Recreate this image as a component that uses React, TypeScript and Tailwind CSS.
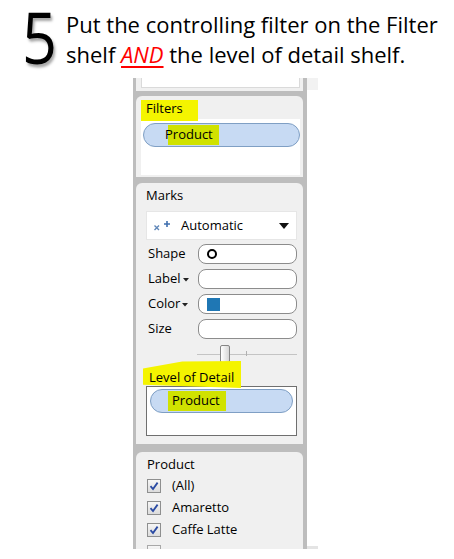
import React from "react";

const Check = () => (
  <div className="w-[14px] h-[14px] border border-[#8e8f8f] bg-gradient-to-b from-[#f6f6f6] to-[#dcdcdc] flex items-center justify-center shrink-0">
    <svg width="10" height="10" viewBox="0 0 10 10">
      <path d="M1.5 5.2 L4 8 L8.6 1.6" fill="none" stroke="#2a4aa3" strokeWidth="1.8" />
    </svg>
  </div>
);

const EmptyCheck = () => (
  <div className="w-[14px] h-[14px] border border-[#a8a8a8] bg-gradient-to-b from-[#f6f6f6] to-[#dcdcdc] shrink-0" />
);

const SmallArrow = () => (
  <svg width="6" height="4" viewBox="0 0 6 4" className="ml-[2px] mt-[2px]">
    <path d="M0 0 L6 0 L3 3.5 Z" fill="#222" />
  </svg>
);

const Pill = ({ hl }: { hl: string }) => (
  <div className="h-[24px] rounded-full border border-[#7f9fc4] bg-[#c7daf3] flex items-center relative">
    <div className={`absolute top-[1px] bottom-[1px] ${hl} bg-[#d0e200]`} />
    <span className="relative ml-[21px]">Product</span>
  </div>
);

export default function App() {
  return (
    <div
      className="w-[454px] h-[559px] bg-white overflow-hidden text-black"
      style={{ fontFamily: '"Open Sans", sans-serif' }}
    >
      <div className="h-[78px] flex">
        <div className="w-[66px] flex justify-center pl-[14px]">
          <span className="text-[72px] leading-[72px] scale-x-[0.85] inline-block [text-shadow:2px_3px_3px_rgba(0,0,0,0.35)]">
            5
          </span>
        </div>
        <div className="pt-[9px] text-[22px] leading-[30px]">
          <div>Put the controlling filter on the Filter</div>
          <div>
            shelf{" "}
            <span className="text-[#ff0000] italic underline decoration-[2px] underline-offset-[3px]">AND</span>{" "}
            the level of detail shelf.
          </div>
        </div>
      </div>

      <div className="flex">
        <div className="ml-[133px] w-[174px] h-[471px] bg-[#bdbdbd] pl-[3px] pr-[4px] flex flex-col overflow-hidden text-[13px]">
          {/* previous card (cut off) */}
          <div className="h-[13px] bg-[#f0f0f0] pl-[5px] pr-[3px] shrink-0">
            <div className="h-[10px] bg-white border-x border-b border-[#dadada]" />
          </div>

          {/* Filters card */}
          <div className="mt-[5px] h-[81px] bg-[#f0f0f0] rounded-t-[6px] pl-[5px] pr-[3px] flex flex-col shrink-0">
            <div className="h-[23px] flex items-center relative">
              <div className="absolute left-0 top-[4px] w-[57px] h-[21px] bg-[#f4f400]" />
              <span className="relative ml-[5px] leading-[16px]">Filters</span>
            </div>
            <div className="h-[56px] bg-white pt-[4px] pl-[2px]">
              <Pill hl="left-[24px] w-[51px]" />
            </div>
          </div>

          {/* Marks card */}
          <div className="mt-[6px] h-[261px] bg-[#f0f0f0] rounded-t-[6px] pl-[10px] pr-[6px] flex flex-col shrink-0">
            <div className="h-[28px] flex items-center">
              <span className="leading-[16px] mb-[4px]">Marks</span>
            </div>
            <div className="h-[29px] bg-white border border-[#e6e6e6] flex items-center pl-[6px] pr-[7px]">
              <svg width="18" height="12" viewBox="0 0 18 12" className="mr-[10px]">
                <path d="M1.5 5.5 L6 10 M6 5.5 L1.5 10" stroke="#5f86b8" strokeWidth="1.4" />
                <path d="M11 4 L17 4 M14 1 L14 7" stroke="#3f6fae" strokeWidth="1.6" />
              </svg>
              <span className="flex-1">Automatic</span>
              <svg width="10" height="6" viewBox="0 0 10 6">
                <path d="M0 0 L10 0 L5 6 Z" fill="#111" />
              </svg>
            </div>

            <div className="mt-[4px] flex flex-col gap-[5px]">
              <div className="h-[20px] flex items-center">
                <span className="w-[52px] pl-[2px]">Shape</span>
                <div className="flex-1 h-[20px] rounded-[8px] border border-[#8c8c8c] bg-white flex items-center pl-[8px]">
                  <div className="w-[10px] h-[10px] rounded-full border-[2px] border-black" />
                </div>
              </div>
              <div className="h-[20px] flex items-center">
                <span className="w-[52px] pl-[2px] flex items-center">
                  Label
                  <SmallArrow />
                </span>
                <div className="flex-1 h-[20px] rounded-[8px] border border-[#8c8c8c] bg-white" />
              </div>
              <div className="h-[20px] flex items-center">
                <span className="w-[52px] pl-[2px] flex items-center">
                  Color
                  <SmallArrow />
                </span>
                <div className="flex-1 h-[20px] rounded-[8px] border border-[#8c8c8c] bg-white flex items-center pl-[8px]">
                  <div className="w-[13px] h-[13px] bg-[#1f77b4]" />
                </div>
              </div>
              <div className="h-[20px] flex items-center">
                <span className="w-[52px] pl-[2px]">Size</span>
                <div className="flex-1 h-[20px] rounded-[8px] border border-[#8c8c8c] bg-white" />
              </div>
            </div>

            {/* slider */}
            <div className="mt-[6px] h-[18px] flex items-center">
              <div className="w-[51px]" />
              <div className="flex-1 relative h-[18px] flex items-center">
                <div className="w-full h-[1px] bg-[#c4c4c4]" />
                <div className="absolute left-[49px] top-[6px] w-[1px] h-[5px] bg-[#b0b0b0]" />
                <div className="absolute left-[23px] top-0 w-[10px] h-[18px] rounded-[2px] border border-[#858585] bg-gradient-to-r from-[#ffffff] to-[#d6d6d6]" />
              </div>
            </div>

            {/* Level of Detail */}
            <div className="h-[23px] relative flex items-end">
              <div className="absolute left-[-3px] top-[-2px] w-[98px] h-[27px] bg-[#f4f400] [clip-path:polygon(0_28%,40%_2%,100%_0,100%_100%,0_88%)]" />
              <span className="relative ml-[3px] leading-[16px] mb-[1px]">Level of Detail</span>
            </div>
            <div className="h-[50px] border border-[#6f6f6f] bg-white pt-[2px] px-[3px]">
              <Pill hl="left-[17px] w-[58px]" />
            </div>
          </div>

          {/* Product card */}
          <div className="mt-[8px] flex-1 bg-[#f0f0f0] rounded-t-[6px] pl-[11px] pr-[6px] flex flex-col">
            <div className="h-[23px] flex items-center">
              <span className="leading-[16px]">Product</span>
            </div>
            {["(All)", "Amaretto", "Caffe Latte"].map((t) => (
              <div key={t} className="h-[22px] flex items-center shrink-0">
                <Check />
                <span className="ml-[11px]">{t}</span>
              </div>
            ))}
            <div className="h-[22px] flex items-center shrink-0">
              <EmptyCheck />
            </div>
          </div>
        </div>
        <div className="w-[11px] h-[471px] flex flex-col">
          <div className="h-[12px] bg-[#f2f2f2]" />
          <div className="flex-1" />
          <div className="h-[3px] bg-[#e4e4e4]" />
        </div>
      </div>
    </div>
  );
}
